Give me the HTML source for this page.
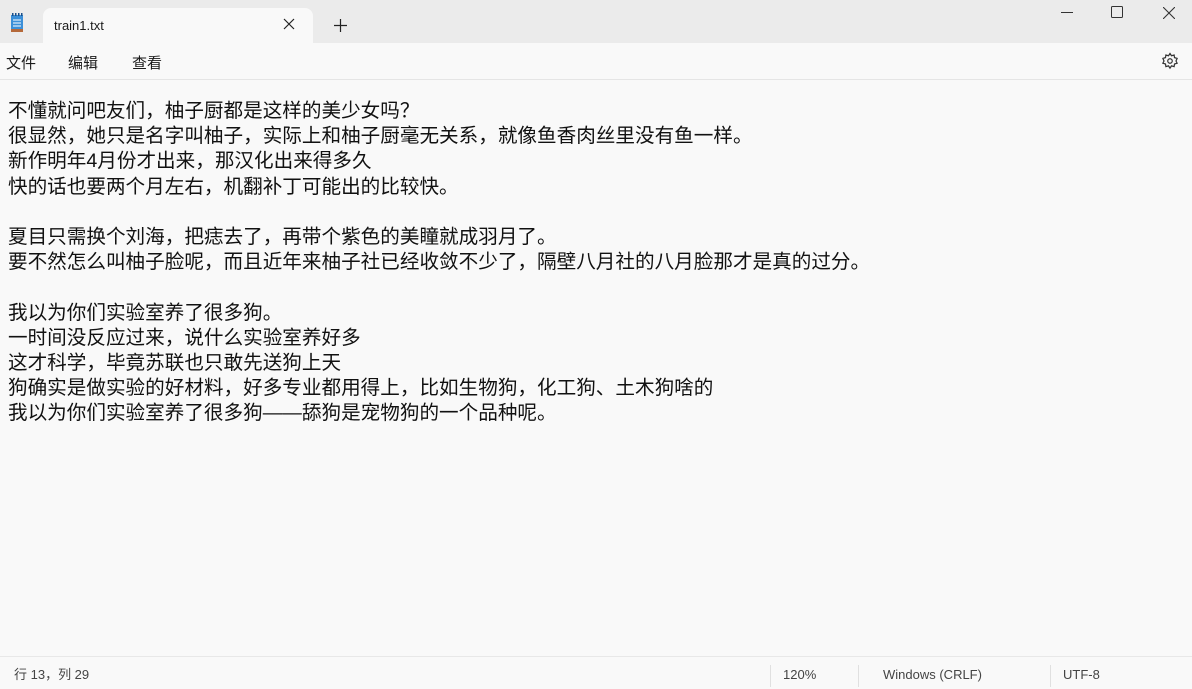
<!DOCTYPE html><html><head><style>
body{margin:0;width:1192px;height:688px;background:#f9f9f9;font-family:"Liberation Sans","Noto Sans CJK SC",sans-serif;overflow:hidden;position:relative}
.title{position:absolute;top:0;left:0;width:1192px;height:43px;background:#ebebeb}
.tab{position:absolute;left:43px;top:8px;width:270px;height:35px;background:#f9f9f9;border-radius:8px 8px 0 0}
.tab span{position:absolute;left:11px;top:10px;font-size:13px;color:#1a1a1a}
.menu{position:absolute;top:43px;left:0;width:1192px;height:36px;border-bottom:1px solid #e5e5e5;font-size:15px;color:#1a1a1a}
.menu span{position:absolute;top:9px}
.text{position:absolute;left:8px;top:99px;font-size:19.6px;line-height:25.2px;color:#111;white-space:pre}
.status{position:absolute;top:656px;left:0;width:1192px;height:32px;border-top:1px solid #e8e8e8;font-size:13px;color:#444}
.status span{position:absolute;top:10px;line-height:16px}
.sep{position:absolute;top:8px;width:1px;height:22px;background:#e0e0e0}
</style></head><body>
<div class="title">
<svg style="position:absolute;left:10px;top:13px" width="14" height="20"><rect x="1" y="2" width="12" height="15" fill="#3b8fd8"/><rect x="1" y="16" width="12" height="3" fill="#b5693a"/><g stroke="#fff" stroke-width="1"><line x1="3" y1="7" x2="11" y2="7"/><line x1="3" y1="10" x2="11" y2="10"/><line x1="3" y1="13" x2="11" y2="13"/></g><g fill="#1b4f8a"><rect x="2" y="0" width="1.5" height="3"/><rect x="5" y="0" width="1.5" height="3"/><rect x="8" y="0" width="1.5" height="3"/><rect x="11" y="0" width="1.5" height="3"/></g></svg>
<div class="tab"><span>train1.txt</span>
<svg style="position:absolute;left:240px;top:10px" width="12" height="12" stroke="#222" stroke-width="1.2"><path d="M1 1L11 11M11 1L1 11"/></svg></div>
<svg style="position:absolute;left:334px;top:19px" width="13" height="13" stroke="#222" stroke-width="1.2"><path d="M6.5 0V13M0 6.5H13"/></svg>
<svg style="position:absolute;left:1061px;top:12px" width="12" height="2"><rect width="12" height="1" fill="#333"/></svg>
<svg style="position:absolute;left:1111px;top:6px" width="13" height="13"><rect x="0.5" y="0.5" width="11" height="11" fill="none" stroke="#333" rx="1"/></svg>
<svg style="position:absolute;left:1163px;top:7px" width="12" height="12" stroke="#333" stroke-width="1.1"><path d="M0 0L12 12M12 0L0 12"/></svg>
</div>
<div class="menu"><span style="left:6px">文件</span><span style="left:68px">编辑</span><span style="left:132px">查看</span>
<svg style="position:absolute;left:1161px;top:9px" width="18" height="18" viewBox="0 0 24 24" fill="none" stroke="#333" stroke-width="1.6"><circle cx="12" cy="12" r="3"/><path d="M12 2l2 3 3.5-1 .5 3.5 3.5 1-1.5 3.5 1.5 3-3.5 1-.5 3.5-3.5-1-2 3-2-3-3.5 1-.5-3.5-3.5-1 1.5-3-1.5-3.5 3.5-1 .5-3.5 3.5 1z"/></svg></div>
<div class="text">不懂就问吧友们，柚子厨都是这样的美少女吗？
很显然，她只是名字叫柚子，实际上和柚子厨毫无关系，就像鱼香肉丝里没有鱼一样。
新作明年4月份才出来，那汉化出来得多久
快的话也要两个月左右，机翻补丁可能出的比较快。

夏目只需换个刘海，把痣去了，再带个紫色的美瞳就成羽月了。
要不然怎么叫柚子脸呢，而且近年来柚子社已经收敛不少了，隔壁八月社的八月脸那才是真的过分。

我以为你们实验室养了很多狗。
一时间没反应过来，说什么实验室养好多
这才科学，毕竟苏联也只敢先送狗上天
狗确实是做实验的好材料，好多专业都用得上，比如生物狗，化工狗、土木狗啥的
我以为你们实验室养了很多狗——舔狗是宠物狗的一个品种呢。</div>
<div class="status"><span style="left:14px">行 13，列 29</span>
<div class="sep" style="left:770px"></div><span style="left:783px">120%</span>
<div class="sep" style="left:858px"></div><span style="left:883px">Windows (CRLF)</span>
<div class="sep" style="left:1050px"></div><span style="left:1063px">UTF-8</span></div>
</body></html>
